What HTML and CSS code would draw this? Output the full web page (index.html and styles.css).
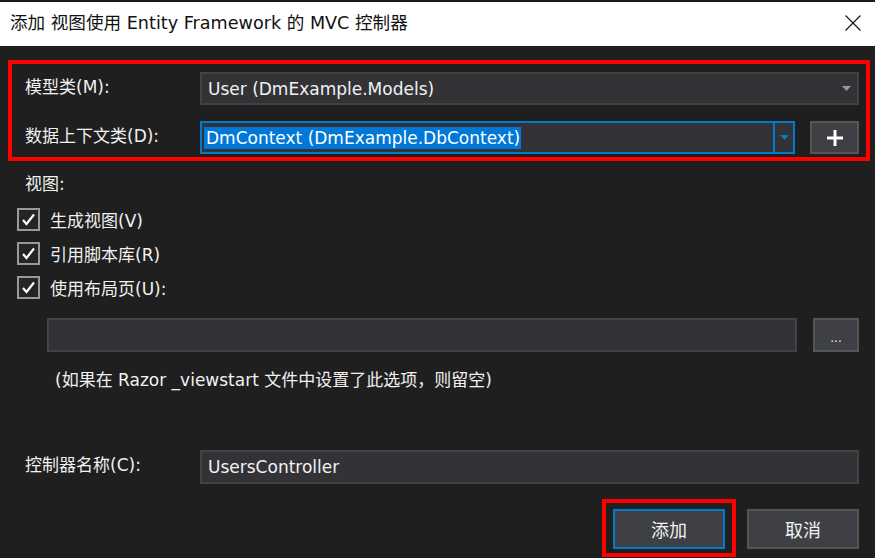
FILE: index.html
```html
<!DOCTYPE html>
<html lang="zh-CN">
<head>
<meta charset="utf-8">
<title>添加 视图使用 Entity Framework 的 MVC 控制器</title>
<link rel="stylesheet" href="styles.css">
</head>
<body>
<div class="dialog">
  <div class="titlebar">
    <div class="title">添加 视图使用 Entity Framework 的 MVC 控制器</div>
    <svg class="close" width="16" height="16" viewBox="0 0 16 16"><path d="M0.5 0.5 L15.5 15.5 M15.5 0.5 L0.5 15.5" stroke="#111" stroke-width="1.1" fill="none"/></svg>
  </div>
  <div class="body">
    <div class="mark-box">
      <div class="form-grid">
        <div class="label">模型类(M):</div>
        <div class="combo">
          <span class="combo-text">User (DmExample.Models)</span>
          <span class="combo-arrow"><svg width="9" height="5" viewBox="0 0 9 5"><path d="M0 0 H9 L4.5 5 Z" fill="#999"/></svg></span>
        </div>
        <div class="label">数据上下文类(D):</div>
        <div class="combo-line">
          <div class="combo combo-active">
            <span class="combo-text"><span class="selected">DmContext (DmExample.DbContext)</span></span>
            <span class="combo-arrow arrow-active"><svg width="9" height="5" viewBox="0 0 9 5"><path d="M0 0 H9 L4.5 5 Z" fill="#007acc"/></svg></span>
          </div>
          <button class="btn btn-plus"><svg width="18" height="18" viewBox="0 0 18 18"><path d="M9 1 V17 M1 9 H17" stroke="#fff" stroke-width="3" fill="none"/></svg></button>
        </div>
      </div>
    </div>

    <div class="section-label">视图:</div>
    <div class="checks">
      <label class="check-row"><span class="checkbox"><svg width="15" height="13" viewBox="0 0 15 13"><path d="M2 7 L5.5 11 L13 1.5" stroke="#fff" stroke-width="2.2" fill="none"/></svg></span><span class="check-text">生成视图(V)</span></label>
      <label class="check-row"><span class="checkbox"><svg width="15" height="13" viewBox="0 0 15 13"><path d="M2 7 L5.5 11 L13 1.5" stroke="#fff" stroke-width="2.2" fill="none"/></svg></span><span class="check-text">引用脚本库(R)</span></label>
      <label class="check-row"><span class="checkbox"><svg width="15" height="13" viewBox="0 0 15 13"><path d="M2 7 L5.5 11 L13 1.5" stroke="#fff" stroke-width="2.2" fill="none"/></svg></span><span class="check-text">使用布局页(U):</span></label>
    </div>

    <div class="layout-row">
      <div class="textbox layout-box"></div>
      <button class="btn btn-dots">...</button>
    </div>
    <div class="note">(如果在 Razor _viewstart 文件中设置了此选项，则留空)</div>

    <div class="controller-row">
      <div class="label">控制器名称(C):</div>
      <div class="textbox controller-box">UsersController</div>
    </div>

    <div class="actions">
      <div class="mark-btn"><button class="btn btn-action btn-default">添加</button></div>
      <button class="btn btn-action btn-cancel">取消</button>
    </div>
  </div>
</div>
</body>
</html>
```

FILE: styles.css
```css
* { box-sizing: border-box; }
html, body { margin: 0; padding: 0; }
body {
  width: 875px;
  height: 558px;
  overflow: hidden;
  background: #1f1f1f;
  font-family: "DejaVu Sans", "Noto Sans CJK SC", sans-serif;
  font-size: 17px;
  color: #f1f1f1;
}
.dialog { width: 875px; height: 558px; }
.titlebar {
  height: 46px;
  border-top: 2px solid #1a1a1a;
  background: #ffffff;
  display: flex;
  align-items: center;
  padding: 0 14px 0 10px;
  color: #111;
}
.title { flex: 1; font-size: 17.6px; line-height: 20px; padding-bottom: 2px; }
.close { display: block; margin-bottom: 2px; }

.body { padding-top: 14px; }

.mark-box {
  margin-left: 8px;
  width: 862px;
  border: 4px solid #ff0000;
  padding: 8px 7px 3px 13px;
}
.form-grid {
  display: grid;
  grid-template-columns: 175px 1fr;
  row-gap: 16px;
  align-items: center;
}
.label { line-height: 20px; padding-bottom: 4px; }
.combo {
  height: 33px;
  background: #333337;
  border: 2px solid #434346;
  display: flex;
  align-items: center;
  line-height: 22px;
}
.combo-text { flex: 1; padding-left: 6px; white-space: nowrap; overflow: hidden; }
.combo-active { border-color: #007acc; flex: 1; }
.combo-active .combo-text { padding-left: 2px; }
.combo-arrow { width: 22px; display: flex; align-items: center; justify-content: center; align-self: stretch; }
.selected { background: #0078d7; color: #fff; padding: 3px 1px 4px 2px; }
.arrow-active { border-left: 2px solid #007acc; width: 20px; }
.combo-line { display: flex; gap: 15px; }

.btn {
  background: #3f3f46;
  border: 2px solid #555555;
  color: #f1f1f1;
  font-family: inherit;
  font-size: 17px;
  padding: 0;
  display: flex;
  align-items: center;
  justify-content: center;
}
.btn-plus { width: 49px; height: 33px; }

.section-label { margin: 13px 0 0 25px; line-height: 20px; }
.checks { margin: 14px 0 0 17px; display: flex; flex-direction: column; gap: 11px; }
.check-row { display: flex; align-items: center; gap: 10px; height: 23px; line-height: 20px; }
.check-text { padding-top: 3px; }
.checkbox {
  width: 23px; height: 23px;
  border: 2px solid #999999;
  background: #252526;
  display: flex; align-items: center; justify-content: center;
}

.layout-row { margin: 19px 16px 0 47px; display: flex; gap: 16px; height: 34px; }
.textbox {
  background: #333337;
  border: 2px solid #434346;
  height: 34px;
  line-height: 22px;
  padding: 4px 6px;
}
.layout-box { flex: 1; }
.btn-dots { width: 46px; height: 34px; font-size: 12px; padding-top: 5px; }
.note { margin: 18px 0 0 55px; line-height: 20px; }

.controller-row { margin: 60px 16px 0 25px; display: grid; grid-template-columns: 175px 1fr; align-items: center; }

.actions { margin: 15px 16px 0 0; display: flex; justify-content: flex-end; align-items: flex-start; }
.mark-btn { border: 4px solid #ff0000; padding: 6px 7px 4px 7px; }
.btn-action { width: 112px; height: 40px; font-size: 18px; }
.btn-default { border-color: #007acc; }
.btn-cancel { margin: 10px 0 0 11px; }
```
